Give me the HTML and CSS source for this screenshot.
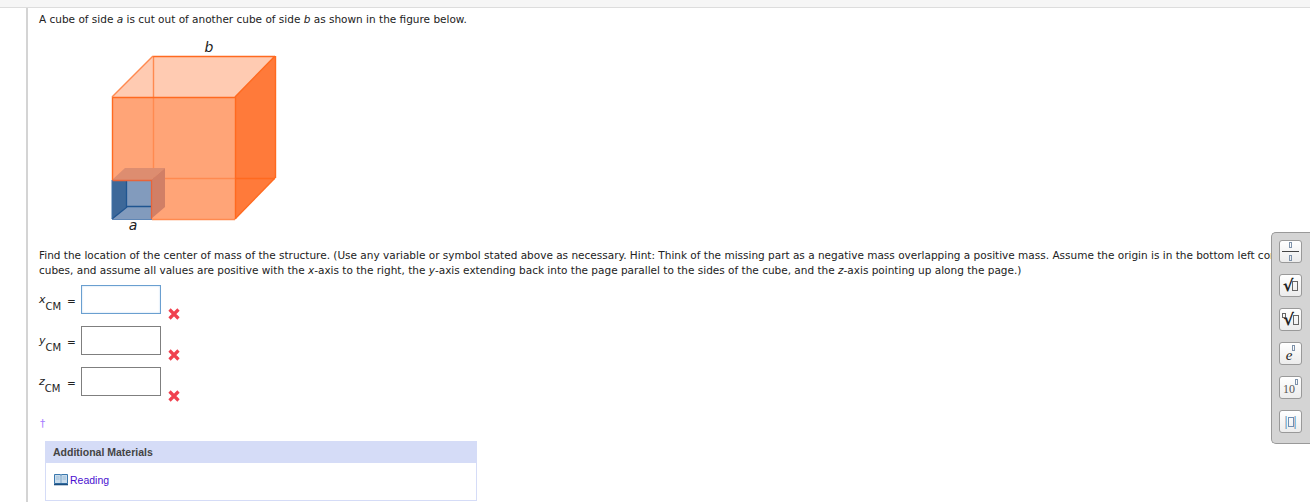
FILE: index.html
```html
<!DOCTYPE html>
<html lang="en">
<head>
  <meta charset="UTF-8">
  <title>Center of mass question</title>
  <link rel="stylesheet" href="styles.css">
</head>
<body>

<div class="topbar"></div>
<div class="page">
  <div class="gutter"></div>
  <div class="content">
    <p class="intro">A cube of side <i>a</i> is cut out of another cube of side <i>b</i> as shown in the figure below.</p>

    <svg class="figure" width="190" height="196" viewBox="100 36 190 196">
      <text class="fig-label" x="209" y="52">b</text>
      <polygon points="153,56 275,56 235,97 112,97" fill="#ffcbb2"/>
      <polygon points="112,97 235,97 235,219 112,219" fill="#ffa477"/>
      <polygon points="235,97 275,56 275,178 235,219" fill="#ff7a3a"/>
      <path d="M153.5 56V178M153 178.5H235" stroke="#ff8a50" stroke-width="1.4" fill="none"/>
      <path d="M235 178.5H275" stroke="#ff6a20" stroke-width="1.4" fill="none"/>
      <polygon points="127,180 151,180 151,207 127,207" fill="#829bbd"/>
      <polygon points="112,180 127,180 127,207 112,219" fill="#3d6899"/>
      <polygon points="112,219 127,207 151,207 151,219" fill="#829bbd"/>
      <polygon points="112,180 125,168 165,168 151,180" fill="#dd8d70"/>
      <polygon points="151,180 165,168 165,207 151,219" fill="#d17f66"/>
      <path d="M126.5 180V207M127 206.5H151M127 207L112 219" stroke="#1f5591" stroke-width="1.3" fill="none"/>
      <path d="M112 180.5H151.5V219" stroke="#e8653a" stroke-width="1.3" fill="none"/>
      <path d="M112.5 97V180M112 97.5H235.5V219M153 56.5H275M275.5 56V178M235 97L275 56" stroke="#ff6a20" stroke-width="1.4" fill="none"/>
      <path d="M112 97L153 56" stroke="#ff8a50" stroke-width="1.4" fill="none"/>
      <path d="M235 219L275 178" stroke="#ff6a20" stroke-width="1.4" fill="none"/>
      <path d="M152 219.5H235" stroke="#ff8a50" stroke-width="1.4" fill="none"/>
      <path d="M112 219.5H152" stroke="#5f86b5" stroke-width="1" fill="none"/>
      <path d="M112 180V219" stroke="#3f70a6" stroke-width="1" fill="none"/>
      <text class="fig-label" x="133" y="230">a</text>
    </svg>

    <p class="question">Find the location of the center of mass of the structure. (Use any variable or symbol stated above as necessary. Hint: Think of the missing part as a negative mass overlapping a positive mass. Assume the origin is in the bottom left corner<br>cubes, and assume all values are positive with the <i>x</i>-axis to the right, the <i>y</i>-axis extending back into the page parallel to the sides of the cube, and the <i>z</i>-axis pointing up along the page.)</p>

    <div class="answers">
      <div class="answer">
        <span class="var"><i>x</i><sub>CM</sub></span><span class="eq">=</span>
        <input class="field focus" type="text">
        <svg class="wrong" width="12" height="12" viewBox="0 0 12 12"><path d="M1.5 1.5L10.5 10.5M10.5 1.5L1.5 10.5"/></svg>
      </div>
      <div class="answer">
        <span class="var"><i>y</i><sub>CM</sub></span><span class="eq">=</span>
        <input class="field" type="text">
        <svg class="wrong" width="12" height="12" viewBox="0 0 12 12"><path d="M1.5 1.5L10.5 10.5M10.5 1.5L1.5 10.5"/></svg>
      </div>
      <div class="answer">
        <span class="var"><i>z</i><sub>CM</sub></span><span class="eq">=</span>
        <input class="field" type="text">
        <svg class="wrong" width="12" height="12" viewBox="0 0 12 12"><path d="M1.5 1.5L10.5 10.5M10.5 1.5L1.5 10.5"/></svg>
      </div>
    </div>

    <div class="dagger">†</div>

    <div class="materials">
      <div class="materials-head">Additional Materials</div>
      <div class="materials-body">
        <svg class="book" width="14" height="13" viewBox="0 0 14 13">
          <path d="M0.5 1.5H6.5L7 2.5L7.5 1.5H13.5V10.5H0.5Z" fill="#c9dcec" stroke="#3b78ad"/>
          <path d="M7 2.5V10" stroke="#7fa6c8"/>
          <path d="M2 4H5.5M2 6H5.5M8.5 4H12M8.5 6H12" stroke="#9dbcd6"/>
          <path d="M0 11.5H14" stroke="#1c4f80" stroke-width="1.6"/>
        </svg>
        <a class="reading" href="#">Reading</a>
      </div>
    </div>
  </div>
</div>

<div class="palette">
  <button class="pal-btn"><span class="frac"><span class="box"></span><span class="bar"></span><span class="box"></span></span></button>
  <button class="pal-btn"><span class="root">√</span><span class="box big"></span></button>
  <button class="pal-btn"><span class="box tiny"></span><span class="root">√</span><span class="box big"></span></button>
  <button class="pal-btn"><span class="serif e">e</span><span class="box up"></span></button>
  <button class="pal-btn"><span class="serif ten">10</span><span class="box up"></span></button>
  <button class="pal-btn"><span class="pipe">|</span><span class="box big blue"></span><span class="pipe">|</span></button>
</div>

</body>
</html>
```

FILE: styles.css
```css
* { box-sizing: border-box; }
html, body {
  height: 100%;
  overflow: hidden;
}
body {
  margin: 0;
  background: #fff;
  color: #222;
  font-family: "DejaVu Sans", Verdana, sans-serif;
  font-size: 10.5px;
  line-height: 15px;
}
.topbar {
  height: 8px;
  background: #f6f6f6;
  border-bottom: 1px solid #ddd;
}
.page {
  display: flex;
  height: 494px;
}
.gutter {
  width: 28px;
  flex: none;
  border-right: 2px solid #d4d4d4;
}
.content {
  flex: 1;
  padding: 4px 0 0 11px;
  min-width: 0;
}
.intro {
  margin: 0;
  white-space: nowrap;
}
.figure {
  display: block;
  margin: 9px 0 0 61px;
}
.fig-label {
  font-family: "DejaVu Sans", Verdana, sans-serif;
  font-size: 14px;
  font-style: italic;
  fill: #222;
  text-anchor: middle;
}
.question {
  margin: 16px 0 0;
  white-space: nowrap;
}
.answers {
  margin-top: 7px;
  display: flex;
  flex-direction: column;
  gap: 12px;
}
.answer {
  display: flex;
  align-items: flex-start;
  height: 29px;
}
.var {
  width: 28px;
  padding-top: 7px;
  font-size: 11px;
}
.var sub {
  font-size: 10px;
  line-height: 0;
  vertical-align: -7px;
}
.eq {
  width: 14px;
  padding-top: 9px;
}
.field {
  width: 80px;
  height: 29px;
  border: 1px solid #7f7f7f;
  background: #fff;
  padding: 0;
}
.field.focus {
  border-color: #6a9fd0;
  box-shadow: inset 0 0 2px #b8d4ee;
}
.wrong {
  margin: 23px 0 0 7px;
}
.wrong path {
  stroke: #f0414f;
  stroke-width: 3.2;
  fill: none;
}
.dagger {
  margin: 20px 0 0 1px;
  color: #a57cff;
  height: 25px;
}
.materials {
  width: 432px;
  margin-left: 6px;
  border: 1px solid #d5dcf7;
}
.materials-head {
  height: 21px;
  background: #d5dcf7;
  color: #444;
  font-family: "Liberation Sans", Arial, sans-serif;
  font-weight: bold;
  font-size: 10.5px;
  line-height: 20px;
  padding-left: 7px;
}
.materials-body {
  height: 37px;
  padding: 10px 0 0 8px;
  display: flex;
  align-items: flex-start;
  gap: 2px;
}
.reading {
  color: #4a0fd0;
  font-family: "Liberation Sans", Arial, sans-serif;
  font-size: 10.5px;
  line-height: 14px;
  text-decoration: none;
}
.palette {
  position: absolute;
  left: 1271px;
  top: 232px;
  width: 39px;
  height: 212px;
  padding: 7px 0 0 7px;
  display: flex;
  flex-direction: column;
  gap: 11px;
  background: #d4d4d4;
  border: 1px solid #999;
  border-right: 0;
  border-radius: 5px 0 0 5px;
}
.pal-btn {
  width: 23px;
  height: 23px;
  padding: 0;
  display: flex;
  align-items: center;
  justify-content: center;
  background: linear-gradient(#fff, #ececec);
  border: 1px solid #999;
  border-radius: 3px;
  color: #222;
  font-family: "Liberation Serif", serif;
  font-size: 12px;
  line-height: 1;
}
.box {
  display: block;
  width: 3px;
  height: 6px;
  border: 1px solid #7f93ab;
}
.box.big {
  width: 6px;
  height: 10px;
  border-color: #666;
}
.box.big.blue {
  border-color: #6f8fb5;
}
.box.tiny {
  width: 4px;
  height: 5px;
  margin: -9px -3px 0 0;
  border-color: #666;
}
.box.up {
  margin: -11px 0 0 0;
}
.frac {
  display: flex;
  flex-direction: column;
  align-items: center;
  gap: 3px;
}
.bar {
  width: 17px;
  height: 1px;
  background: #444;
}
.root {
  font-family: "DejaVu Sans", sans-serif;
  font-size: 16px;
  font-weight: bold;
  margin-right: -1px;
}
.e {
  font-style: italic;
  font-size: 15px;
  margin-top: 3px;
}
.ten {
  color: #555;
  font-size: 12px;
  margin-top: 3px;
}
.pipe {
  color: #3a6ea8;
  font-size: 15px;
}
```
